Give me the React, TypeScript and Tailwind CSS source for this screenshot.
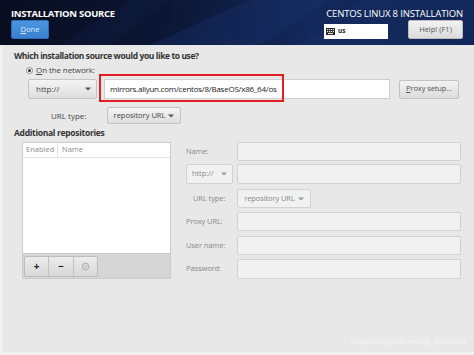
import React from "react";

const font = { fontFamily: '"Open Sans", "Noto Sans", sans-serif' };

function Arrow({ color = "#555" }: { color?: string }) {
  return (
    <svg width="6" height="4" viewBox="0 0 6 4" className="shrink-0">
      <path d="M0 0.5 L6 0.5 L3 3.5 Z" fill={color} />
    </svg>
  );
}

function Disabled({ className = "" }: { className?: string }) {
  return <div className={`rounded-[2px] border border-[#d2d2d2] bg-[#f1f1f1] ${className}`} />;
}

export default function App() {
  return (
    <div className="w-[474px] h-[355px] overflow-hidden flex flex-col bg-[#e8e8e8] text-[#2e2e2e]" style={font}>
      {/* Header */}
      <div className="relative h-[45px] shrink-0 overflow-hidden bg-[linear-gradient(100deg,#080d1f_0%,#0c1634_35%,#13285a_65%,#0f2250_100%)]">
        <svg className="absolute inset-0" width="474" height="45" viewBox="0 0 474 45">
          <polygon points="150,45 250,0 330,0 260,45" fill="#1b3470" opacity="0.35" />
          <polygon points="300,45 360,0 474,0 474,45" fill="#1a3775" opacity="0.25" />
          <polygon points="60,45 130,0 170,0 110,45" fill="#0f1e44" opacity="0.4" />
        </svg>
        <div className="relative flex justify-between pl-[11px] pr-[11px] pt-[8px]">
          <div className="flex flex-col items-start">
            <div className="text-[9.5px] font-bold text-white leading-[12px] tracking-[-0.3px]">INSTALLATION SOURCE</div>
            <div className="w-[38px] h-[19px] rounded-[2px] bg-[linear-gradient(#4a95e0,#3a80d0)] border border-[#2e6cb8] flex items-center justify-center text-[7.5px] text-[#dfe9f7]">
              <span><span className="underline">D</span>one</span>
            </div>
          </div>
          <div className="flex flex-col items-end w-[139px]">
            <div className="text-[9.5px] text-white leading-[12px] tracking-[-0.15px] w-full text-right whitespace-nowrap">CENTOS LINUX 8 INSTALLATION</div>
            <div className="flex w-full items-start">
              <div className="mt-[4px] w-[64px] h-[15px] bg-white flex items-center gap-[3px] pl-[2px]">
                <svg width="9" height="7" viewBox="0 0 9 7">
                  <rect x="0" y="0" width="9" height="7" fill="#222" />
                  <rect x="1" y="1" width="1.3" height="1.2" fill="#ddd" />
                  <rect x="3" y="1" width="1.3" height="1.2" fill="#ddd" />
                  <rect x="5" y="1" width="1.3" height="1.2" fill="#ddd" />
                  <rect x="7" y="1" width="1.2" height="1.2" fill="#ddd" />
                  <rect x="1" y="3" width="1.3" height="1.2" fill="#ddd" />
                  <rect x="3" y="3" width="1.3" height="1.2" fill="#ddd" />
                  <rect x="5" y="3" width="1.3" height="1.2" fill="#ddd" />
                  <rect x="7" y="3" width="1.2" height="1.2" fill="#ddd" />
                  <rect x="2" y="5" width="5" height="1.1" fill="#ddd" />
                </svg>
                <span className="text-[6.5px] font-bold text-[#222] leading-none">us</span>
              </div>
              <div className="ml-auto w-[55px] h-[19px] rounded-[2px] bg-[linear-gradient(#f2f2f2,#dcdcdc)] border border-[#bdbdbd] flex items-center justify-center text-[7.5px] text-[#555]">
                Help! (F1)
              </div>
            </div>
          </div>
        </div>
      </div>

      {/* Body */}
      <div className="relative flex-1 flex flex-col border-l-[3px] border-b-[3px] border-[#f0f0f0] pl-[11px] pt-[5px] text-[8px]">
        <div className="font-bold text-[8.5px] leading-[12px] text-[#333] tracking-[-0.4px]">Which installation source would you like to use?</div>
        <div className="flex items-center gap-[3px] ml-[12px] mt-[3px] h-[10px]">
          <div className="w-[7px] h-[7px] rounded-full border border-[#888] bg-white flex items-center justify-center">
            <div className="w-[3px] h-[3px] rounded-full bg-[#333]" />
          </div>
          <span className="text-[#444] tracking-[-0.1px]"><span className="underline">O</span>n the network:</span>
        </div>

        <div className="relative flex items-center mt-[4px] ml-[14px]">
          <div className="w-[69px] h-[20px] rounded-[2px] bg-[linear-gradient(#f4f4f4,#dedede)] border border-[#c4c4c4] flex items-center justify-between pl-[7px] pr-[5px] text-[#444]">
            <span>http://</span>
            <Arrow />
          </div>
          <div className="ml-[7px] w-[286px] h-[20px] bg-white border border-[#cfcfcf] flex items-center pl-[5px] text-[#222] tracking-[-0.25px]">
            mirrors.aliyun.com/centos/8/BaseOS/x86_64/os
          </div>
          <div className="ml-[9px] w-[60px] h-[19px] rounded-[2px] bg-[linear-gradient(#f3f3f3,#dcdcdc)] border border-[#c2c2c2] flex items-center justify-center text-[7.5px] text-[#555] tracking-[-0.1px]">
            <span><span className="underline">P</span>roxy setup...</span>
          </div>
          <div className="absolute left-[71px] top-[-5px] w-[185px] h-[28px] border-[2px] border-[#e02020]" />
        </div>

        <div className="flex items-center mt-[8px] h-[17px]">
          <div className="w-[93px] pl-[37px] text-[#444]">URL type:</div>
          <div className="w-[74px] h-[17px] rounded-[2px] bg-[linear-gradient(#f4f4f4,#dedede)] border border-[#c4c4c4] flex items-center justify-center gap-[3px] text-[7.5px] text-[#444]">
            <span>repository URL</span>
            <Arrow />
          </div>
        </div>

        <div className="font-bold text-[8.5px] leading-[12px] text-[#333] mt-[3px] tracking-[-0.3px]">Additional repositories</div>

        <div className="flex mt-[3px]">
          <div className="ml-[8px] w-[149px] h-[137px] border border-[#cbcbcb] flex flex-col bg-white">
            <div className="h-[15px] flex items-center border-b border-[#e2e2e2] text-[7.5px] text-[#8a8a8a]">
              <div className="w-[35px] pl-[3px] border-r border-[#e2e2e2] h-full flex items-center">Enabled</div>
              <div className="pl-[4px]">Name</div>
            </div>
            <div className="flex-1" />
            <div className="h-[25px] bg-[#d6d6d6] border-t border-[#c8c8c8] flex items-center pl-[1px]">
              <div className="flex h-[21px] border border-[#bcbcbc] rounded-[2px] overflow-hidden">
                <div className="w-[24px] bg-[linear-gradient(#ececec,#d8d8d8)] flex items-center justify-center text-[10px] font-bold text-[#222] border-r border-[#c2c2c2]">+</div>
                <div className="w-[25px] bg-[linear-gradient(#ececec,#d8d8d8)] flex items-center justify-center text-[10px] font-bold text-[#222] border-r border-[#c2c2c2]">−</div>
                <div className="w-[23px] bg-[linear-gradient(#ececec,#d8d8d8)] flex items-center justify-center">
                  <svg width="9" height="9" viewBox="0 0 10 10">
                    <circle cx="5" cy="5" r="3.6" fill="none" stroke="#aaa" strokeWidth="1.1" />
                    <path d="M5 1.4 L7.2 0.6 L6.6 2.6 Z" fill="#aaa" />
                    <circle cx="5" cy="5" r="1.3" fill="none" stroke="#aaa" strokeWidth="0.8" />
                  </svg>
                </div>
              </div>
            </div>
          </div>

          <div className="ml-[15px] w-[275px] flex flex-col text-[7.5px] text-[#888] tracking-[-0.1px]">
            <div className="flex items-center h-[19px]">
              <div className="w-[51px]">Name:</div>
              <Disabled className="flex-1 h-[19px]" />
            </div>
            <div className="flex items-center h-[20px] mt-[3px]">
              <div className="w-[47px] h-[20px] rounded-[2px] border border-[#d2d2d2] bg-[#f1f1f1] flex items-center justify-between pl-[5px] pr-[5px]">
                <span>http://</span>
                <Arrow color="#999" />
              </div>
              <Disabled className="flex-1 ml-[4px] h-[20px]" />
            </div>
            <div className="flex items-center h-[19px] mt-[5px]">
              <div className="w-[51px] pl-[7px]">URL type:</div>
              <div className="w-[74px] h-[19px] rounded-[2px] border border-[#d2d2d2] bg-[#f1f1f1] flex items-center justify-center gap-[3px]">
                <span>repository URL</span>
                <Arrow color="#999" />
              </div>
            </div>
            <div className="flex items-center h-[19px] mt-[4px]">
              <div className="w-[51px]">Proxy URL:</div>
              <Disabled className="flex-1 h-[19px]" />
            </div>
            <div className="flex items-center h-[19px] mt-[5px]">
              <div className="w-[51px]">User name:</div>
              <Disabled className="flex-1 h-[19px]" />
            </div>
            <div className="flex items-center h-[20px] mt-[4px]">
              <div className="w-[51px]">Password:</div>
              <Disabled className="flex-1 h-[20px]" />
            </div>
          </div>
        </div>

        <div className="absolute right-[8px] bottom-[5px] text-[7.5px] text-white/60 tracking-[-0.2px]">https://blog.csdn.net/qq_40302449</div>
      </div>
    </div>
  );
}
